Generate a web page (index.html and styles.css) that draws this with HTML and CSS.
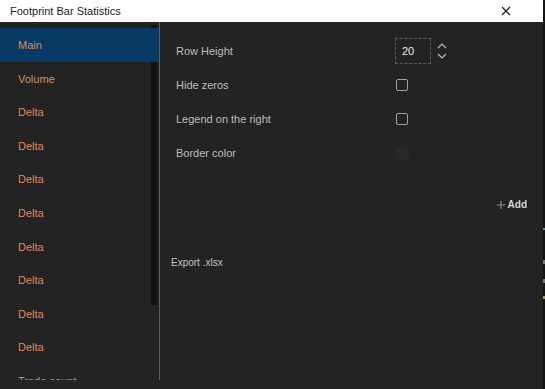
FILE: index.html
```html
<!DOCTYPE html>
<html lang="en">

<head>
    <meta charset="UTF-8">
    <title>Footprint Bar Statistics</title>
    <link rel="stylesheet" href="styles.css">
</head>

<body>
<div class="window">
    <div class="titlebar">
        <span class="title">Footprint Bar Statistics</span>
        <svg class="close" width="10" height="10" viewBox="0 0 10 10">
            <path d="M1 1L9 9M9 1L1 9" stroke="#222" stroke-width="1.3" fill="none"/>
        </svg>
    </div>
    <div class="body">
        <div class="sidebar">
            <div class="scrollbar"></div>
            <ul class="menu">
                <li class="active">Main</li>
                <li>Volume</li>
                <li>Delta</li>
                <li>Delta</li>
                <li>Delta</li>
                <li>Delta</li>
                <li>Delta</li>
                <li>Delta</li>
                <li>Delta</li>
                <li>Delta</li>
                <li>Trade count</li>
            </ul>
        </div>
        <div class="content">
            <div class="row">
                <span class="label">Row Height</span>
                <div class="spin">
                    <span class="num">20</span>
                    <svg class="arrows" width="12" height="22" viewBox="0 0 12 22">
                        <path d="M2 8L6 4L10 8M2 14L6 18L10 14" stroke="#bbb" stroke-width="1.2" fill="none"/>
                    </svg>
                </div>
            </div>
            <div class="row">
                <span class="label">Hide zeros</span>
                <span class="check"></span>
            </div>
            <div class="row">
                <span class="label">Legend on the right</span>
                <span class="check"></span>
            </div>
            <div class="row">
                <span class="label">Border color</span>
                <span class="swatch"></span>
            </div>
            <div class="add">
                <svg width="10" height="10" viewBox="0 0 10 10">
                    <path d="M5 1V9M1 5H9" stroke="#8a8a8a" stroke-width="1.2" fill="none"/>
                </svg>
                <span>Add</span>
            </div>
            <div class="export">Export .xlsx</div>
        </div>
    </div>
    <span class="chart-mark mark1"></span>
    <span class="chart-mark mark2"></span>
    <span class="chart-mark mark3"></span>
    <span class="chart-mark mark4"></span>
</div>
</body>

</html>
```

FILE: styles.css
```css
html,
body {
    margin: 0;
    height: 100%;
    background: #141414;
    font-family: "Liberation Sans", Arial, sans-serif;
}

.window {
    position: relative;
    width: 543px;
    height: 389px;
    background: #232323;
    display: flex;
    flex-direction: column;
}

.titlebar {
    height: 22px;
    background: #fff;
    display: flex;
    align-items: center;
    justify-content: space-between;
    padding: 0 32px 0 10px;
}

.title {
    font-size: 11px;
    color: #1c1c1c;
}

.body {
    display: flex;
    height: 358px;
}

.sidebar {
    position: relative;
    width: 159px;
    border-right: 1px solid #5e5e5e;
    overflow: hidden;
}

.menu {
    position: relative;
    list-style: none;
    margin: 0;
    padding: 6px 0 0;
}

.menu li {
    height: 33.6px;
    line-height: 35px;
    padding-left: 18px;
    font-size: 11px;
    color: #db8b5f;
}

.menu li.active {
    background: #073b66;
}

.scrollbar {
    position: absolute;
    top: 3px;
    left: 151px;
    width: 6px;
    height: 280px;
    background: #121212;
    border-radius: 1px;
}

.content {
    flex: 1;
    padding: 12px 16px 0 16px;
    display: flex;
    flex-direction: column;
}

.row {
    height: 34px;
    display: grid;
    grid-template-columns: 219px auto;
    align-items: center;
}

.label {
    font-size: 11px;
    color: #bdbdbd;
}

.spin {
    display: flex;
    align-items: center;
    gap: 5px;
}

.num {
    width: 28px;
    height: 24px;
    line-height: 24px;
    padding-left: 6px;
    border: 1px dashed #5c5c5c;
    font-size: 11px;
    color: #ececec;
}

.check {
    width: 10px;
    height: 10px;
    border: 1px solid #a0a0a0;
    border-radius: 2px;
    margin-left: 1px;
}

.swatch {
    width: 13px;
    height: 13px;
    background: #282828;
    margin-left: 1px;
}

.add {
    align-self: flex-end;
    margin-top: 29px;
    display: flex;
    align-items: center;
    gap: 2px;
    font-size: 10px;
    font-weight: bold;
    color: #d8d8d8;
}

.export {
    margin: 47px 0 0 -5px;
    font-size: 10px;
    color: #c4c4c4;
}

.chart-mark {
    position: absolute;
    left: 543px;
    width: 2px;
    height: 2px;
}

.mark1 {
    top: 228px;
    background: #2aa8c4;
}

.mark2 {
    top: 260px;
    height: 4px;
    background: #777;
}

.mark3 {
    top: 279px;
    height: 4px;
    background: #777;
}

.mark4 {
    top: 296px;
    height: 3px;
    background: #a8a020;
}
```
